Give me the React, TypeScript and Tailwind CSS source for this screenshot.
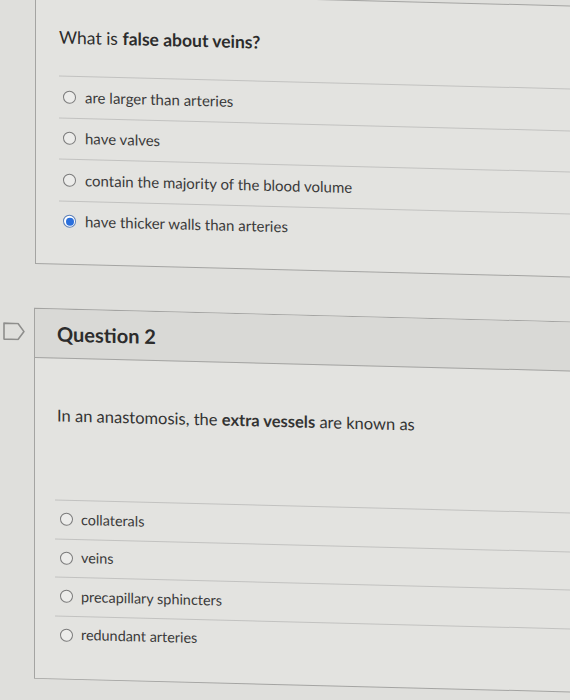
import React from "react";

function Radio({ checked = false }: { checked?: boolean }) {
  if (checked) {
    return (
      <span className="flex h-[13px] w-[13px] shrink-0 items-center justify-center rounded-full border border-[#5b7fb8] bg-white">
        <span className="block h-[8px] w-[8px] rounded-full bg-[#2a6fdc]" />
      </span>
    );
  }
  return <span className="block h-[13px] w-[13px] shrink-0 rounded-full border-[1.5px] border-[#7b7b7b] bg-[#ececea]" />;
}

function Row({ label, checked = false, h, radioMl, gap, size }: { label: string; checked?: boolean; h: string; radioMl: string; gap: string; size: string }) {
  return (
    <div className={`flex items-center border-t border-[#c2c2c0] ${h}`}>
      <span className={`block ${radioMl}`}>
        <Radio checked={checked} />
      </span>
      <span className={`${gap} ${size} leading-none text-[#3a3a3a]`}>{label}</span>
    </div>
  );
}

export default function App() {
  const font = { fontFamily: "Lato, 'Noto Sans', sans-serif" };
  const r1 = { h: "h-[41.5px]", radioMl: "ml-[4px]", gap: "ml-[9px]", size: "text-[15px]" };
  const r2 = { h: "h-[38.5px]", radioMl: "ml-[5px]", gap: "ml-[8px]", size: "text-[14.4px]" };
  return (
    <div className="h-[700px] w-[570px] overflow-hidden bg-[#dfdfdc]" style={font}>
      <div className="mt-[-9px] flex w-[640px] origin-top-left skew-y-[1.45deg] flex-col">
        {/* Card 1 */}
        <div className="ml-[35px] h-[272px] border-y border-l border-[#a4a4a2] bg-[#e3e3e0] pl-[23px] pt-[32px]">
          <div className="text-[17.5px] leading-[24px] text-[#2c2c2c]">
            What is <span className="font-bold">false about veins?</span>
          </div>
          <div className="mt-[26px]">
            <Row label="are larger than arteries" {...r1} />
            <Row label="have valves" {...r1} />
            <Row label="contain the majority of the blood volume" {...r1} />
            <Row label="have thicker walls than arteries" checked {...r1} />
          </div>
        </div>

        {/* Card 2 row */}
        <div className="mt-[44px] flex">
          <div className="w-[34px] shrink-0 pl-[3px] pt-[15px]">
            <svg width="22" height="18" viewBox="0 0 22 18" fill="none">
              <path d="M1 1 H15 L21 9 L15 17 H1 Z" stroke="#8e8e8c" strokeWidth="1.6" strokeLinejoin="round" />
            </svg>
          </div>
          <div className="flex-1 border border-[#a4a4a2] bg-[#e3e3e0]">
            <div className="flex h-[49px] items-center border-b border-[#a4a4a2] bg-[#d9d9d6] pl-[22px]">
              <span className="text-[20px] font-bold leading-none text-[#2c2c2c]">Question 2</span>
            </div>
            <div className="pl-[20px] pt-[45px] pb-[25px]">
              <div className="pl-[2px] text-[16.5px] leading-[24px] text-[#333]">
                In an anastomosis, the <span className="font-bold">extra vessels</span> are known as
              </div>
              <div className="mt-[72px]">
                <Row label="collaterals" {...r2} />
                <Row label="veins" {...r2} />
                <Row label="precapillary sphincters" {...r2} />
                <Row label="redundant arteries" {...r2} />
              </div>
            </div>
          </div>
        </div>
      </div>
    </div>
  );
}
